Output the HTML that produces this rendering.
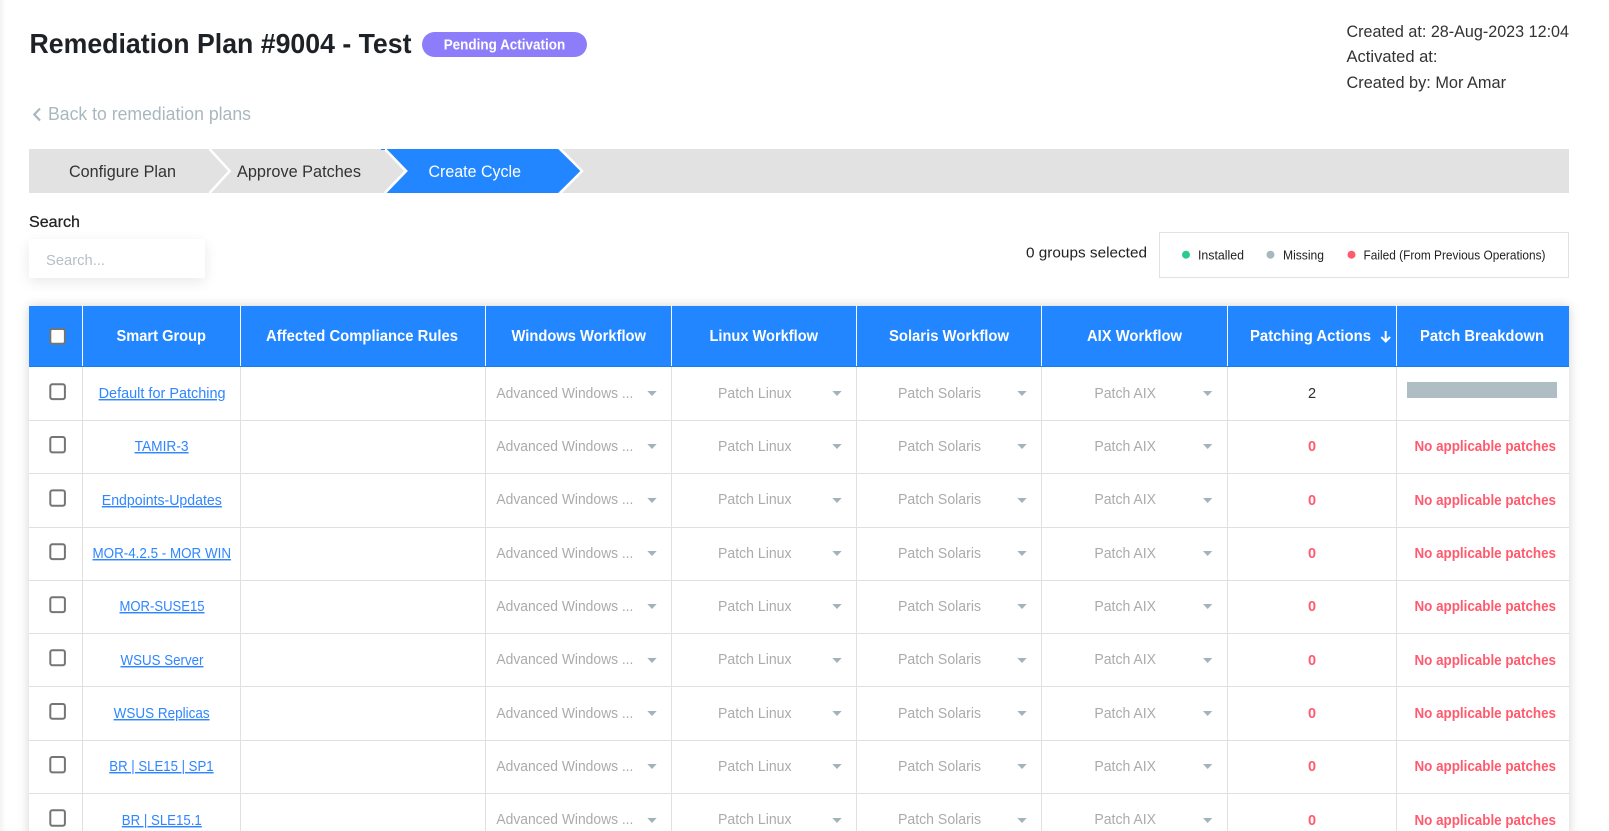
<!DOCTYPE html>
<html><head><meta charset="utf-8"><title>Remediation Plan #9004</title>
<style>
html,body{margin:0;padding:0;width:1609px;height:831px;overflow:hidden;background:#fff}
body{position:relative;font-family:"Liberation Sans",sans-serif}
.edge{position:absolute;left:0;top:0;width:6px;height:831px;background:linear-gradient(90deg,#f3f3f3,#fff)}
.tbl{position:absolute;left:29px;top:306px;width:1540px;height:560px;background:#fff;box-shadow:0 0 10px rgba(0,0,0,.18)}
.inp{position:absolute;left:29px;top:239px;width:176px;height:39px;background:#fff;box-shadow:0 4px 14px rgba(0,0,0,.09);border-radius:2px}
svg{position:absolute;left:0;top:0}
text{font-family:"Liberation Sans",sans-serif;fill:#333}
.h{font-size:16px;font-weight:700;fill:#fff}
.l{font-size:14.5px;fill:#2f86ff;text-decoration:underline}
.s{font-size:14.5px;fill:#ababab}
.r{font-size:14.5px;font-weight:700;fill:#ff5a6e}
.c{fill:#a3b3ba}
.b{fill:#fff;stroke:#757575;stroke-width:2}
</style></head><body>
<div class="edge"></div>
<div class="tbl"></div>
<div class="inp"></div>
<svg width="1609" height="831" viewBox="0 0 1609 831" xmlns="http://www.w3.org/2000/svg">
<text x="29.5" y="53" font-size="28" font-weight="700" style="fill:#1e2226" textLength="382" lengthAdjust="spacingAndGlyphs">Remediation Plan #9004 - Test</text>
<rect x="422" y="32" width="165" height="25" rx="12.5" fill="#8d7dfa"/>
<text x="443.7" y="49.3" font-size="14.5" font-weight="700" style="fill:#fff" textLength="121.5" lengthAdjust="spacingAndGlyphs">Pending Activation</text>
<path d="M40 108.5L34.3 114.5L40 120.5" fill="none" stroke="#a9b8bf" stroke-width="2.2"/>
<text x="48" y="120" font-size="18" style="fill:#a9b8bf" textLength="203" lengthAdjust="spacingAndGlyphs">Back to remediation plans</text>
<text x="1346.5" y="37" font-size="17" textLength="222.5" lengthAdjust="spacingAndGlyphs">Created at: 28-Aug-2023 12:04</text>
<text x="1346.5" y="62" font-size="17" textLength="91" lengthAdjust="spacingAndGlyphs">Activated at:</text>
<text x="1346.5" y="88" font-size="17" textLength="159.5" lengthAdjust="spacingAndGlyphs">Created by: Mor Amar</text>

<rect x="29" y="149" width="1540" height="44" fill="#e2e2e2"/>
<path d="M209.5 149L229.8 171L209.5 193" fill="none" stroke="#fff" stroke-width="2.4"/>
<path d="M384.8 149L405.8 171L384.8 193" fill="none" stroke="#fff" stroke-width="2.4"/>
<polygon points="386.7,149 558,149 580.5,171 558,193 386.7,193 408,171" fill="#2186ff"/>
<path d="M560.5 149L582 171L560.5 193" fill="none" stroke="#fff" stroke-width="2.4"/>
<rect x="381" y="149" width="4" height="1" fill="#2186ff"/>
<text x="69" y="177" font-size="16.5" textLength="107" lengthAdjust="spacingAndGlyphs">Configure Plan</text>
<text x="237" y="177" font-size="16.5" textLength="124" lengthAdjust="spacingAndGlyphs">Approve Patches</text>
<text x="428.5" y="177" font-size="16.5" style="fill:#fff" textLength="92.5" lengthAdjust="spacingAndGlyphs">Create Cycle</text>

<text x="29" y="227" font-size="16" style="fill:#222;stroke:#222;stroke-width:.25" textLength="51" lengthAdjust="spacingAndGlyphs">Search</text>
<text x="46" y="265" font-size="15" style="fill:#b4c0c6" textLength="59" lengthAdjust="spacingAndGlyphs">Search...</text>
<text x="1026" y="257.5" font-size="15" style="fill:#222" textLength="121" lengthAdjust="spacingAndGlyphs">0 groups selected</text>
<rect x="1159.5" y="232.5" width="409" height="45" fill="#fff" stroke="#e2e2e2"/>
<circle cx="1186" cy="254.7" r="4" fill="#2bcb8f"/>
<text x="1198" y="259.5" font-size="12.5" style="fill:#222" textLength="46" lengthAdjust="spacingAndGlyphs">Installed</text>
<circle cx="1270.5" cy="254.7" r="4" fill="#a9b8bf"/>
<text x="1283" y="259.5" font-size="12.5" style="fill:#222" textLength="41" lengthAdjust="spacingAndGlyphs">Missing</text>
<circle cx="1351.5" cy="254.7" r="4" fill="#ff5a6e"/>
<text x="1363.5" y="259.5" font-size="12.5" style="fill:#222" textLength="182" lengthAdjust="spacingAndGlyphs">Failed (From Previous Operations)</text>

<!-- table header -->
<rect x="29" y="306" width="1540" height="61" fill="#2186ff"/>
<rect x="29" y="366" width="1540" height="1" fill="#1b7cec"/>
<g fill="#fff">
<rect x="82" y="306" width="1" height="60"/><rect x="240" y="306" width="1" height="60"/><rect x="485" y="306" width="1" height="60"/><rect x="671" y="306" width="1" height="60"/><rect x="856" y="306" width="1" height="60"/><rect x="1041" y="306" width="1" height="60"/><rect x="1227" y="306" width="1" height="60"/><rect x="1396" y="306" width="1" height="60"/>
</g>
<rect x="50.3" y="329" width="14.6" height="14.8" rx="2" class="b"/>
<text class="h" x="116.5" y="341" textLength="89.5" lengthAdjust="spacingAndGlyphs">Smart Group</text>
<text class="h" x="266" y="341" textLength="192" lengthAdjust="spacingAndGlyphs">Affected Compliance Rules</text>
<text class="h" x="511.5" y="341" textLength="134.5" lengthAdjust="spacingAndGlyphs">Windows Workflow</text>
<text class="h" x="709.5" y="341" textLength="108.5" lengthAdjust="spacingAndGlyphs">Linux Workflow</text>
<text class="h" x="889" y="341" textLength="120" lengthAdjust="spacingAndGlyphs">Solaris Workflow</text>
<text class="h" x="1087" y="341" textLength="95" lengthAdjust="spacingAndGlyphs">AIX Workflow</text>
<text class="h" x="1250" y="341" textLength="121" lengthAdjust="spacingAndGlyphs">Patching Actions</text>
<path d="M1385.7 331V341M1381.3 337L1385.7 341.5L1390.1 337" fill="none" stroke="#fff" stroke-width="2"/>
<text class="h" x="1420" y="341" textLength="124" lengthAdjust="spacingAndGlyphs">Patch Breakdown</text>

<!-- grid -->
<g fill="#e0e0e0">
<rect x="82" y="367" width="1" height="464"/><rect x="240" y="367" width="1" height="464"/><rect x="485" y="367" width="1" height="464"/><rect x="671" y="367" width="1" height="464"/><rect x="856" y="367" width="1" height="464"/><rect x="1041" y="367" width="1" height="464"/><rect x="1227" y="367" width="1" height="464"/><rect x="1396" y="367" width="1" height="464"/>
<rect x="29" y="420" width="1540" height="1"/><rect x="29" y="473" width="1540" height="1"/><rect x="29" y="527" width="1540" height="1"/><rect x="29" y="580" width="1540" height="1"/><rect x="29" y="633" width="1540" height="1"/><rect x="29" y="686" width="1540" height="1"/><rect x="29" y="740" width="1540" height="1"/><rect x="29" y="793" width="1540" height="1"/>
</g>

<!-- row 1 -->
<g>
<rect x="50.3" y="384.3" width="14.6" height="14.8" rx="2" class="b"/>
<text class="l" x="98.6" y="398" textLength="127" lengthAdjust="spacingAndGlyphs">Default for Patching</text>
<text class="s" x="496.4" y="398" textLength="137" lengthAdjust="spacingAndGlyphs">Advanced Windows ...</text><polygon class="c" points="647.3,391 656.7,391 652,396"/>
<text class="s" x="718" y="398" textLength="73.5" lengthAdjust="spacingAndGlyphs">Patch Linux</text><polygon class="c" points="832.3,391 841.7,391 837,396"/>
<text class="s" x="898" y="398" textLength="83" lengthAdjust="spacingAndGlyphs">Patch Solaris</text><polygon class="c" points="1017.3,391 1026.7,391 1022,396"/>
<text class="s" x="1094.4" y="398" textLength="61.6" lengthAdjust="spacingAndGlyphs">Patch AIX</text><polygon class="c" points="1203,391 1212.3,391 1207.6,396"/>
<text x="1312" y="398" font-size="14.5" text-anchor="middle" style="fill:#2a2f33">2</text>
<rect x="1407" y="382" width="150" height="16" fill="#afbec4"/>
</g>
<!-- row 2 -->
<g transform="translate(0,53)">
<rect x="50.3" y="384" width="14.6" height="15.4" rx="2" class="b"/>
<text class="l" x="134.6" y="398" textLength="54" lengthAdjust="spacingAndGlyphs">TAMIR-3</text>
<text class="s" x="496.4" y="398" textLength="137" lengthAdjust="spacingAndGlyphs">Advanced Windows ...</text><polygon class="c" points="647.3,391 656.7,391 652,396"/>
<text class="s" x="718" y="398" textLength="73.5" lengthAdjust="spacingAndGlyphs">Patch Linux</text><polygon class="c" points="832.3,391 841.7,391 837,396"/>
<text class="s" x="898" y="398" textLength="83" lengthAdjust="spacingAndGlyphs">Patch Solaris</text><polygon class="c" points="1017.3,391 1026.7,391 1022,396"/>
<text class="s" x="1094.4" y="398" textLength="61.6" lengthAdjust="spacingAndGlyphs">Patch AIX</text><polygon class="c" points="1203,391 1212.3,391 1207.6,396"/>
<text class="r" x="1312" y="398" text-anchor="middle">0</text>
<text class="r" x="1414.5" y="398" textLength="141.5" lengthAdjust="spacingAndGlyphs">No applicable patches</text>
</g>
<!-- row 3 -->
<g transform="translate(0,107)">
<rect x="50.3" y="383.4" width="14.6" height="15.4" rx="2" class="b"/>
<text class="l" x="101.8" y="398" textLength="120" lengthAdjust="spacingAndGlyphs">Endpoints-Updates</text>
<text class="s" x="496.4" y="397" textLength="137" lengthAdjust="spacingAndGlyphs">Advanced Windows ...</text><polygon class="c" points="647.3,391 656.7,391 652,396"/>
<text class="s" x="718" y="397" textLength="73.5" lengthAdjust="spacingAndGlyphs">Patch Linux</text><polygon class="c" points="832.3,391 841.7,391 837,396"/>
<text class="s" x="898" y="397" textLength="83" lengthAdjust="spacingAndGlyphs">Patch Solaris</text><polygon class="c" points="1017.3,391 1026.7,391 1022,396"/>
<text class="s" x="1094.4" y="397" textLength="61.6" lengthAdjust="spacingAndGlyphs">Patch AIX</text><polygon class="c" points="1203,391 1212.3,391 1207.6,396"/>
<text class="r" x="1312" y="398" text-anchor="middle">0</text>
<text class="r" x="1414.5" y="398" textLength="141.5" lengthAdjust="spacingAndGlyphs">No applicable patches</text>
</g>
<!-- row 4 -->
<g transform="translate(0,160)">
<rect x="50.3" y="384.3" width="14.6" height="14.8" rx="2" class="b"/>
<text class="l" x="92.5" y="398" textLength="138.5" lengthAdjust="spacingAndGlyphs">MOR-4.2.5 - MOR WIN</text>
<text class="s" x="496.4" y="398" textLength="137" lengthAdjust="spacingAndGlyphs">Advanced Windows ...</text><polygon class="c" points="647.3,391 656.7,391 652,396"/>
<text class="s" x="718" y="398" textLength="73.5" lengthAdjust="spacingAndGlyphs">Patch Linux</text><polygon class="c" points="832.3,391 841.7,391 837,396"/>
<text class="s" x="898" y="398" textLength="83" lengthAdjust="spacingAndGlyphs">Patch Solaris</text><polygon class="c" points="1017.3,391 1026.7,391 1022,396"/>
<text class="s" x="1094.4" y="398" textLength="61.6" lengthAdjust="spacingAndGlyphs">Patch AIX</text><polygon class="c" points="1203,391 1212.3,391 1207.6,396"/>
<text class="r" x="1312" y="398" text-anchor="middle">0</text>
<text class="r" x="1414.5" y="398" textLength="141.5" lengthAdjust="spacingAndGlyphs">No applicable patches</text>
</g>
<!-- row 5 -->
<g transform="translate(0,213)">
<rect x="50.3" y="384.3" width="14.6" height="14.8" rx="2" class="b"/>
<text class="l" x="119.5" y="398" textLength="85" lengthAdjust="spacingAndGlyphs">MOR-SUSE15</text>
<text class="s" x="496.4" y="398" textLength="137" lengthAdjust="spacingAndGlyphs">Advanced Windows ...</text><polygon class="c" points="647.3,391 656.7,391 652,396"/>
<text class="s" x="718" y="398" textLength="73.5" lengthAdjust="spacingAndGlyphs">Patch Linux</text><polygon class="c" points="832.3,391 841.7,391 837,396"/>
<text class="s" x="898" y="398" textLength="83" lengthAdjust="spacingAndGlyphs">Patch Solaris</text><polygon class="c" points="1017.3,391 1026.7,391 1022,396"/>
<text class="s" x="1094.4" y="398" textLength="61.6" lengthAdjust="spacingAndGlyphs">Patch AIX</text><polygon class="c" points="1203,391 1212.3,391 1207.6,396"/>
<text class="r" x="1312" y="398" text-anchor="middle">0</text>
<text class="r" x="1414.5" y="398" textLength="141.5" lengthAdjust="spacingAndGlyphs">No applicable patches</text>
</g>
<!-- row 6 -->
<g transform="translate(0,267)">
<rect x="50.3" y="383.3" width="14.6" height="15" rx="2" class="b"/>
<text class="l" x="120.5" y="398" textLength="83" lengthAdjust="spacingAndGlyphs">WSUS Server</text>
<text class="s" x="496.4" y="397" textLength="137" lengthAdjust="spacingAndGlyphs">Advanced Windows ...</text><polygon class="c" points="647.3,391 656.7,391 652,396"/>
<text class="s" x="718" y="397" textLength="73.5" lengthAdjust="spacingAndGlyphs">Patch Linux</text><polygon class="c" points="832.3,391 841.7,391 837,396"/>
<text class="s" x="898" y="397" textLength="83" lengthAdjust="spacingAndGlyphs">Patch Solaris</text><polygon class="c" points="1017.3,391 1026.7,391 1022,396"/>
<text class="s" x="1094.4" y="397" textLength="61.6" lengthAdjust="spacingAndGlyphs">Patch AIX</text><polygon class="c" points="1203,391 1212.3,391 1207.6,396"/>
<text class="r" x="1312" y="398" text-anchor="middle">0</text>
<text class="r" x="1414.5" y="398" textLength="141.5" lengthAdjust="spacingAndGlyphs">No applicable patches</text>
</g>
<!-- row 7 -->
<g transform="translate(0,320)">
<rect x="50.3" y="384" width="14.6" height="14.8" rx="2" class="b"/>
<text class="l" x="113.6" y="398" textLength="96" lengthAdjust="spacingAndGlyphs">WSUS Replicas</text>
<text class="s" x="496.4" y="398" textLength="137" lengthAdjust="spacingAndGlyphs">Advanced Windows ...</text><polygon class="c" points="647.3,391 656.7,391 652,396"/>
<text class="s" x="718" y="398" textLength="73.5" lengthAdjust="spacingAndGlyphs">Patch Linux</text><polygon class="c" points="832.3,391 841.7,391 837,396"/>
<text class="s" x="898" y="398" textLength="83" lengthAdjust="spacingAndGlyphs">Patch Solaris</text><polygon class="c" points="1017.3,391 1026.7,391 1022,396"/>
<text class="s" x="1094.4" y="398" textLength="61.6" lengthAdjust="spacingAndGlyphs">Patch AIX</text><polygon class="c" points="1203,391 1212.3,391 1207.6,396"/>
<text class="r" x="1312" y="398" text-anchor="middle">0</text>
<text class="r" x="1414.5" y="398" textLength="141.5" lengthAdjust="spacingAndGlyphs">No applicable patches</text>
</g>
<!-- row 8 -->
<g transform="translate(0,373)">
<rect x="50.3" y="384" width="14.6" height="15.4" rx="2" class="b"/>
<text class="l" x="109.3" y="398" textLength="104.3" lengthAdjust="spacingAndGlyphs">BR | SLE15 | SP1</text>
<text class="s" x="496.4" y="398" textLength="137" lengthAdjust="spacingAndGlyphs">Advanced Windows ...</text><polygon class="c" points="647.3,391 656.7,391 652,396"/>
<text class="s" x="718" y="398" textLength="73.5" lengthAdjust="spacingAndGlyphs">Patch Linux</text><polygon class="c" points="832.3,391 841.7,391 837,396"/>
<text class="s" x="898" y="398" textLength="83" lengthAdjust="spacingAndGlyphs">Patch Solaris</text><polygon class="c" points="1017.3,391 1026.7,391 1022,396"/>
<text class="s" x="1094.4" y="398" textLength="61.6" lengthAdjust="spacingAndGlyphs">Patch AIX</text><polygon class="c" points="1203,391 1212.3,391 1207.6,396"/>
<text class="r" x="1312" y="398" text-anchor="middle">0</text>
<text class="r" x="1414.5" y="398" textLength="141.5" lengthAdjust="spacingAndGlyphs">No applicable patches</text>
</g>
<!-- row 9 -->
<g transform="translate(0,427)">
<rect x="50.3" y="383.3" width="14.6" height="15.4" rx="2" class="b"/>
<text class="l" x="121.8" y="398" textLength="80" lengthAdjust="spacingAndGlyphs">BR | SLE15.1</text>
<text class="s" x="496.4" y="397" textLength="137" lengthAdjust="spacingAndGlyphs">Advanced Windows ...</text><polygon class="c" points="647.3,391 656.7,391 652,396"/>
<text class="s" x="718" y="397" textLength="73.5" lengthAdjust="spacingAndGlyphs">Patch Linux</text><polygon class="c" points="832.3,391 841.7,391 837,396"/>
<text class="s" x="898" y="397" textLength="83" lengthAdjust="spacingAndGlyphs">Patch Solaris</text><polygon class="c" points="1017.3,391 1026.7,391 1022,396"/>
<text class="s" x="1094.4" y="397" textLength="61.6" lengthAdjust="spacingAndGlyphs">Patch AIX</text><polygon class="c" points="1203,391 1212.3,391 1207.6,396"/>
<text class="r" x="1312" y="398" text-anchor="middle">0</text>
<text class="r" x="1414.5" y="398" textLength="141.5" lengthAdjust="spacingAndGlyphs">No applicable patches</text>
</g>
</svg>
</body></html>
